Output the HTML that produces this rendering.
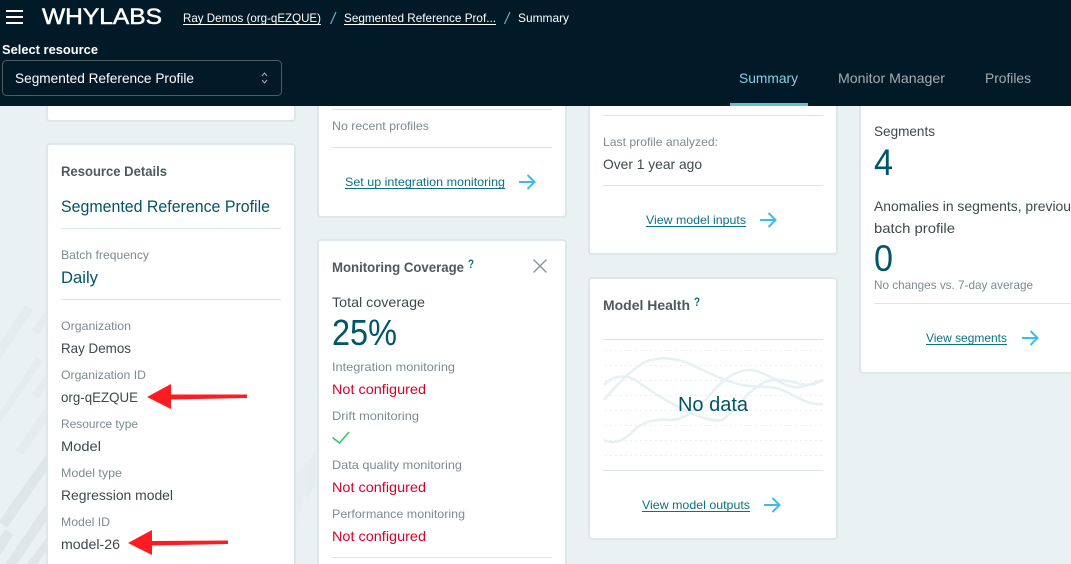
<!DOCTYPE html>
<html lang="en">
<head>
<meta charset="utf-8">
<title>Summary</title>
<style>
html,body{margin:0;padding:0;width:1071px;height:564px;overflow:hidden;background:#e9f1f3}
svg{display:block}
text{font-family:"Liberation Sans",sans-serif}
.l{font-size:12px;fill:#7e8b8f}
.v{font-size:14px;fill:#3f494c}
.h{font-size:13.5px;font-weight:bold;fill:#4f595b}
.t{fill:#005566}
.r{font-size:14px;fill:#d7002c}
.a{font-size:12px;fill:#0a7286}
.q{font-size:12px;font-weight:bold;fill:#0a7286}
.card{fill:#fff;stroke:#dde6e8;stroke-width:2}
.ln{stroke:#dce5e7;stroke-width:1}
.ul{stroke:#0a7286;stroke-width:1}
.ar{fill:none;stroke:#3dbde6;stroke-width:2}
.nav{font-size:14px;fill:#a3adb2}
.bc{font-size:12px;fill:#fff}
.cv{fill:none;stroke:#e8f0f2;stroke-width:2.5}
.dt{stroke:#e2e9eb;stroke-width:1;stroke-dasharray:1.5 3.5}
</style>
</head>
<body>
<svg width="1071" height="564" viewBox="0 0 1071 564" xmlns="http://www.w3.org/2000/svg">
<rect width="1071" height="564" fill="#e9f1f3"/>
<!-- background stripes -->
<g fill="#e5ecee">
<polygon points="25,305 33,310 0,360 0,343"/>
<polygon points="37,357 42,362 0,423 0,412"/>
<polygon points="45,312 47,323 38,335 32,330"/>
<polygon points="45,375 47,387 38,399 32,394"/>
<polygon points="45,408 47,421 23,455 16,450"/>
<polygon points="306,465 316,450 316,485 306,500" fill="#e6edef"/>
<polygon points="296,475 306,462 306,490 296,525" fill="#e7eef0"/>
</g>
<g fill="#dfe6e8">
<polygon points="46,455 47,470 7,528 0,523 0,520"/>
<polygon points="6,529 13,535 0,555 0,537"/>
<polygon points="47,503 47,520 17,564 5,564"/>
<polygon points="47,537 47,550 37,564 27,564"/>
</g>

<!-- cards -->
<rect class="card" x="47" y="60" width="248" height="61" rx="3"/>
<path class="card" d="M47 564V147a3 3 0 0 1 3-3H292a3 3 0 0 1 3 3V564"/>
<rect class="card" x="318" y="60" width="248" height="157" rx="3"/>
<path class="card" d="M318 564V243a3 3 0 0 1 3-3H563a3 3 0 0 1 3 3V564"/>
<rect class="card" x="589" y="60" width="248" height="194" rx="3"/>
<rect class="card" x="589" y="278" width="248" height="261" rx="3"/>
<path class="card" d="M1071 373H863a3 3 0 0 1-3-3V60H1071"/>

<!-- header -->
<rect width="1071" height="106" fill="#021a27"/>
<g stroke="#fff" stroke-width="2"><line x1="6" y1="11" x2="23" y2="11"/><line x1="6" y1="17" x2="23" y2="17"/><line x1="6" y1="23" x2="23" y2="23"/></g>
<text x="42" y="24" font-size="22" fill="#fff" stroke="#fff" stroke-width="0.5" textLength="120" lengthAdjust="spacingAndGlyphs">WHYLABS</text>

<text class="bc" x="183" y="22" textLength="138" lengthAdjust="spacingAndGlyphs">Ray Demos (org-qEZQUE)</text>
<line x1="183" y1="24.5" x2="321" y2="24.5" stroke="#fff"/>
<line x1="330.500" y1="24" x2="336" y2="12" stroke="#6fc6d8"/>
<text class="bc" x="344" y="22" textLength="152" lengthAdjust="spacingAndGlyphs">Segmented Reference Prof...</text>
<line x1="344" y1="24.5" x2="496" y2="24.5" stroke="#fff"/>
<line x1="504.500" y1="24" x2="510" y2="12" stroke="#6fc6d8"/>
<text class="bc" x="518" y="22" textLength="51" lengthAdjust="spacingAndGlyphs">Summary</text>

<text x="2" y="54" font-size="13" font-weight="bold" fill="#fff" textLength="96" lengthAdjust="spacingAndGlyphs">Select resource</text>
<rect x="2.5" y="60.5" width="279" height="35" rx="4" fill="none" stroke="#4d5d66"/>
<text x="15" y="83" font-size="14" fill="#fff" textLength="179" lengthAdjust="spacingAndGlyphs">Segmented Reference Profile</text>
<path d="M262 76l2.500-3 2.500 3M262 80l2.500 3 2.500-3" fill="none" stroke="#a3adb2" stroke-width="1"/>

<text x="739" y="83" font-size="14" fill="#7fd3e4" textLength="59" lengthAdjust="spacingAndGlyphs">Summary</text>
<text class="nav" x="838" y="83" textLength="107" lengthAdjust="spacingAndGlyphs">Monitor Manager</text>
<text class="nav" x="985" y="83" textLength="46" lengthAdjust="spacingAndGlyphs">Profiles</text>
<rect x="730" y="103" width="78" height="3" fill="#5cc2d6"/>

<!-- Resource Details -->
<text class="h" x="61" y="176" textLength="106" lengthAdjust="spacingAndGlyphs">Resource Details</text>
<text class="t" x="61" y="212" font-size="17" textLength="209" lengthAdjust="spacingAndGlyphs">Segmented Reference Profile</text>
<line class="ln" x1="61" y1="228.500" x2="281" y2="228.500"/>
<text class="l" x="61" y="259" textLength="88" lengthAdjust="spacingAndGlyphs">Batch frequency</text>
<text class="t" x="61" y="283" font-size="17" textLength="37" lengthAdjust="spacingAndGlyphs">Daily</text>
<line class="ln" x1="61" y1="299.500" x2="281" y2="299.500"/>
<text class="l" x="61" y="330" textLength="70" lengthAdjust="spacingAndGlyphs">Organization</text>
<text class="v" x="61" y="353" textLength="70" lengthAdjust="spacingAndGlyphs">Ray Demos</text>
<text class="l" x="61" y="379" textLength="85" lengthAdjust="spacingAndGlyphs">Organization ID</text>
<text class="v" x="61" y="402" textLength="77" lengthAdjust="spacingAndGlyphs">org-qEZQUE</text>
<text class="l" x="61" y="428" textLength="77" lengthAdjust="spacingAndGlyphs">Resource type</text>
<text class="v" x="61" y="451" textLength="40" lengthAdjust="spacingAndGlyphs">Model</text>
<text class="l" x="61" y="477" textLength="61" lengthAdjust="spacingAndGlyphs">Model type</text>
<text class="v" x="61" y="500" textLength="112" lengthAdjust="spacingAndGlyphs">Regression model</text>
<text class="l" x="61" y="526" textLength="49" lengthAdjust="spacingAndGlyphs">Model ID</text>
<text class="v" x="61" y="549" textLength="59" lengthAdjust="spacingAndGlyphs">model-26</text>

<!-- red arrows -->
<g fill="#fe1c22">
<polygon points="147,397 171,384 171,394.500 247,394.500 247,398 171,399.500 171,409"/>
<polygon points="128,543 152,530 152,541 228,540.500 228,544 152,545.500 152,555"/>
</g>

<!-- Integration card -->
<line class="ln" x1="332" y1="109.500" x2="552" y2="109.500"/>
<text class="l" x="332" y="130" textLength="97" lengthAdjust="spacingAndGlyphs">No recent profiles</text>
<line class="ln" x1="332" y1="147.500" x2="552" y2="147.500"/>
<text class="a" x="345" y="186" textLength="160" lengthAdjust="spacingAndGlyphs">Set up integration monitoring</text>
<line class="ul" x1="345" y1="188.500" x2="505" y2="188.500"/>
<path class="ar" d="M519 182h15M527.500 175l7 7-7 7"/>

<!-- Monitoring Coverage -->
<text class="h" x="332" y="272" textLength="132" lengthAdjust="spacingAndGlyphs">Monitoring Coverage</text>
<text class="q" x="468" y="268" textLength="6" lengthAdjust="spacingAndGlyphs">?</text>
<path d="M533.500 259.500l13 13M546.500 259.500l-13 13" stroke="#8e9a9c" stroke-width="1.500" fill="none"/>
<text class="v" x="332" y="307" textLength="93" lengthAdjust="spacingAndGlyphs">Total coverage</text>
<text class="t" x="332" y="345" font-size="36" textLength="65" lengthAdjust="spacingAndGlyphs">25%</text>
<text class="l" x="332" y="371" textLength="123" lengthAdjust="spacingAndGlyphs">Integration monitoring</text>
<text class="r" x="332" y="394" textLength="94" lengthAdjust="spacingAndGlyphs">Not configured</text>
<text class="l" x="332" y="420" textLength="87" lengthAdjust="spacingAndGlyphs">Drift monitoring</text>
<path d="M332.500 437.500l7 5.500 9.500-11" fill="none" stroke="#2fc56e" stroke-width="1.500"/>
<text class="l" x="332" y="469" textLength="130" lengthAdjust="spacingAndGlyphs">Data quality monitoring</text>
<text class="r" x="332" y="492" textLength="94" lengthAdjust="spacingAndGlyphs">Not configured</text>
<text class="l" x="332" y="518" textLength="133" lengthAdjust="spacingAndGlyphs">Performance monitoring</text>
<text class="r" x="332" y="541" textLength="94" lengthAdjust="spacingAndGlyphs">Not configured</text>
<line class="ln" x1="332" y1="557.500" x2="552" y2="557.500"/>

<!-- Model inputs card -->
<line class="ln" x1="603" y1="115.500" x2="823" y2="115.500"/>
<text class="l" x="603" y="146" textLength="115" lengthAdjust="spacingAndGlyphs">Last profile analyzed:</text>
<text class="v" x="603" y="169" textLength="99" lengthAdjust="spacingAndGlyphs">Over 1 year ago</text>
<line class="ln" x1="603" y1="185.500" x2="823" y2="185.500"/>
<text class="a" x="646" y="224" textLength="100" lengthAdjust="spacingAndGlyphs">View model inputs</text>
<line class="ul" x1="646" y1="226.500" x2="746" y2="226.500"/>
<path class="ar" d="M760 220h15M768.500 213l7 7-7 7"/>

<!-- Model Health -->
<text class="h" x="603" y="310" textLength="87" lengthAdjust="spacingAndGlyphs">Model Health</text>
<text class="q" x="694" y="306" textLength="6" lengthAdjust="spacingAndGlyphs">?</text>
<line class="ln" x1="603" y1="339.500" x2="823" y2="339.500"/>
<g>
<line class="dt" x1="605" y1="350.500" x2="823" y2="350.500"/>
<line class="dt" x1="605" y1="365.500" x2="823" y2="365.500"/>
<line class="dt" x1="605" y1="380.500" x2="823" y2="380.500"/>
<line class="dt" x1="605" y1="395.500" x2="823" y2="395.500"/>
<line class="dt" x1="605" y1="410.500" x2="823" y2="410.500"/>
<line class="dt" x1="605" y1="425.500" x2="823" y2="425.500"/>
<line class="dt" x1="605" y1="440.500" x2="823" y2="440.500"/>
<line class="dt" x1="605" y1="455.500" x2="823" y2="455.500"/>
</g>
<path class="cv" d="M604 400C615 387 630 370 645 362C660 356 672 358 685 362C700 368 720 380 742 385C760 388 772 385 785 391C798 398 812 406 823 404"/>
<path class="cv" d="M604 385C612 376 625 374 635 380C650 390 660 398 685 410C700 418 715 422 722 420C735 412 745 392 765 382C785 375 800 388 815 384L823 380"/>
<path class="cv" d="M604 440C612 444 620 443 630 434C640 424 650 418 670 420C685 420 695 410 710 395C722 380 735 370 750 370C770 372 785 390 800 387C810 385 815 382 823 380"/>
<text class="t" x="678" y="411" font-size="20" textLength="70" lengthAdjust="spacingAndGlyphs">No data</text>
<line class="ln" x1="603" y1="470.500" x2="823" y2="470.500"/>
<text class="a" x="642" y="509" textLength="108" lengthAdjust="spacingAndGlyphs">View model outputs</text>
<line class="ul" x1="642" y1="511.500" x2="750" y2="511.500"/>
<path class="ar" d="M764 505h15M772.500 498l7 7-7 7"/>

<!-- Segments -->
<text class="v" x="874" y="136" textLength="61" lengthAdjust="spacingAndGlyphs">Segments</text>
<text class="t" x="874" y="175" font-size="37" textLength="19" lengthAdjust="spacingAndGlyphs">4</text>
<text class="v" x="874" y="211" textLength="197" lengthAdjust="spacingAndGlyphs">Anomalies in segments, previou</text>
<text class="v" x="874" y="233" textLength="81" lengthAdjust="spacingAndGlyphs">batch profile</text>
<text class="t" x="874" y="271" font-size="37" textLength="19" lengthAdjust="spacingAndGlyphs">0</text>
<text class="l" x="874" y="289" textLength="159" lengthAdjust="spacingAndGlyphs">No changes vs. 7-day average</text>
<line class="ln" x1="874" y1="303.500" x2="1071" y2="303.500"/>
<text class="a" x="926" y="342" textLength="81" lengthAdjust="spacingAndGlyphs">View segments</text>
<line class="ul" x1="926" y1="344.500" x2="1007" y2="344.500"/>
<path class="ar" d="M1022 338h15M1030.500 331l7 7-7 7"/>
</svg>
</body>
</html>
